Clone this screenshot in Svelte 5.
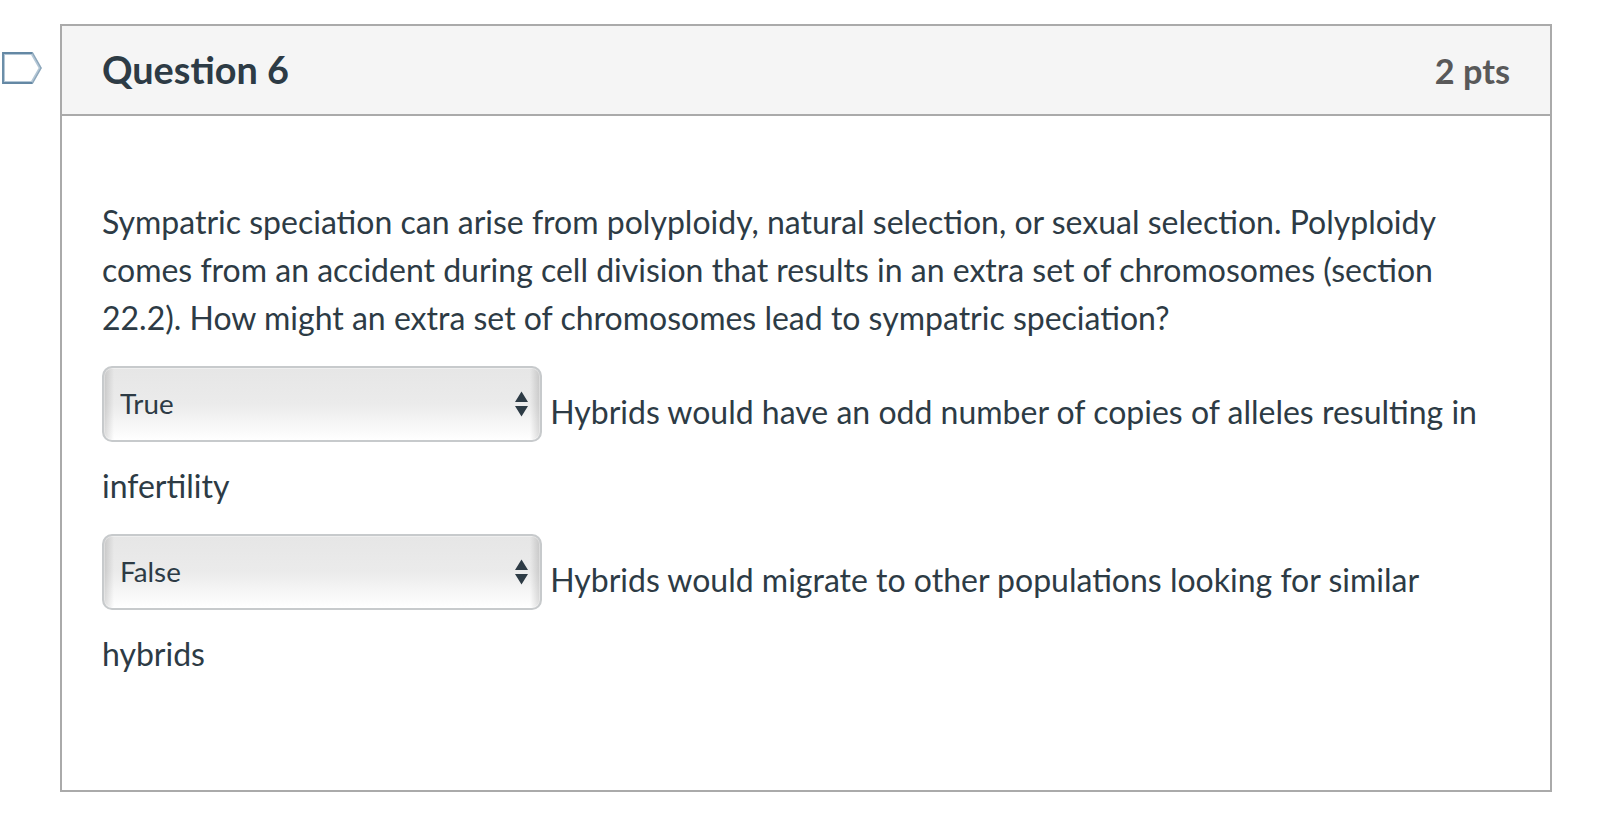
<script lang="ts">
	const question =
		'Sympatric speciation can arise from polyploidy, natural selection, or sexual selection. Polyploidy comes from an accident during cell division that results in an extra set of chromosomes (section 22.2). How might an extra set of chromosomes lead to sympatric speciation?';

	const choices = ['True', 'False'];

	let answers = $state([
		{ value: 'True', text: 'Hybrids would have an odd number of copies of alleles resulting in infertility' },
		{ value: 'False', text: 'Hybrids would migrate to other populations looking for similar hybrids' }
	]);
</script>

<main class="quiz">
	<button class="flag" aria-label="Flag question">
		<svg width="42" height="34" viewBox="0 0 42 34" fill="none">
			<path d="M3.5 2.5H32L40.3 17L32 31.5H3.5Z" stroke="#b4c7d6" stroke-width="3" />
			<path d="M32.5 2H3V32H32.5" stroke="#6488a4" stroke-width="1.8" />
			<path d="M32.5 2L41 17L32.5 32" stroke="#8ba5b9" stroke-width="1.2" />
		</svg>
	</button>

	<section class="question">
		<header class="question-header">
			<h1>Question 6</h1>
			<span class="points">2 pts</span>
		</header>

		<div class="question-body">
			<p>{question}</p>
			{#each answers as answer}
				<p>
					<span class="picker">
						<select bind:value={answer.value}>
							{#each choices as choice}
								<option>{choice}</option>
							{/each}
						</select>
						<svg class="arrows" width="14" height="26" viewBox="0 0 14 26" aria-hidden="true">
							<path d="M7.5 0.5L14 11H1ZM1 15H14L7.5 25.5Z" />
						</svg>
					</span>
					{answer.text}
				</p>
			{/each}
		</div>
	</section>
</main>

<style>
	:global(body) {
		background: #fff;
	}

	.quiz {
		display: flex;
		align-items: flex-start;
		box-sizing: border-box;
		width: 1606px;
		height: 824px;
		padding-top: 24px;
		color: #2d3b45;
		font-family: Lato, sans-serif;
		font-size: 32px;
		line-height: 48px;
	}

	.flag {
		display: flex;
		flex: none;
		width: 60px;
		margin: 27px 0 0;
		padding: 0;
		border: 0;
		background: none;
	}

	.question {
		box-sizing: border-box;
		width: 1492px;
		height: 768px;
		border: 2px solid #aaa;
	}

	.question-header {
		display: flex;
		justify-content: space-between;
		align-items: center;
		box-sizing: border-box;
		height: 90px;
		padding: 0 40px;
		border-bottom: 2px solid #aaa;
		background: #f5f5f5;
	}

	h1 {
		margin: 0;
		font-size: 37.8px;
		font-weight: 700;
	}

	.points {
		padding-top: 2px;
		color: #595959;
		font-size: 34.3px;
		font-weight: 700;
	}

	.question-body {
		padding: 82px 40px 0;
	}

	p {
		margin: 0;
	}

	.picker {
		position: relative;
		display: inline-block;
		width: 440px;
		height: 76px;
		margin: 24px 0 20px;
		overflow: hidden;
		vertical-align: -38px;
	}

	select {
		display: block;
		box-sizing: border-box;
		width: 100%;
		height: 100%;
		padding: 0 40px 2px 16px;
		border: 2px solid #c7cacc;
		border-radius: 10px;
		appearance: none;
		background:
			linear-gradient(90deg, rgba(0, 0, 0, 0.14), transparent 10px, transparent calc(100% - 10px), rgba(0, 0, 0, 0.14)),
			linear-gradient(#e6e6e6, #ebebeb 50%, #fff);
		box-shadow: inset 0 0 0 1px rgba(255, 255, 255, 0.35);
		color: inherit;
		font: 27.8px Lato, sans-serif;
	}

	.arrows {
		position: absolute;
		top: 25px;
		right: 14px;
		fill: #2d3b45;
		pointer-events: none;
	}
</style>
